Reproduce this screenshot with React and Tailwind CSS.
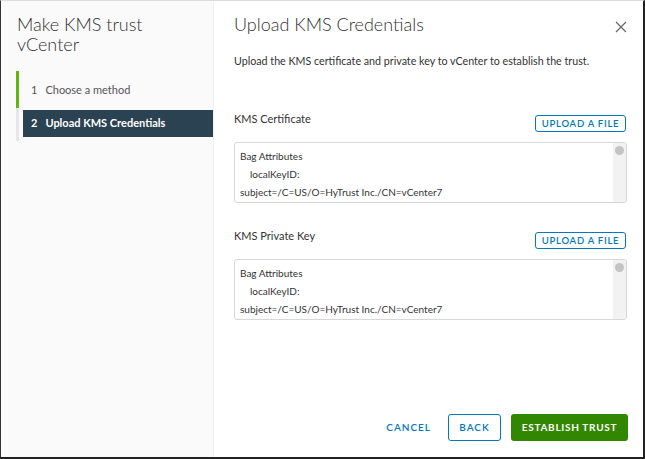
import React from "react";

function CertBox({ keyLine }) {
  return (
    <div className="mt-[10px] h-[61px] rounded-[3px] border border-[#d7d7d7] bg-white flex overflow-hidden">
      <div className="flex-1 pl-[5px] pt-[4px] text-[10px] leading-[18px] text-[#333]">
        <div>Bag Attributes</div>
        <div className="pl-[10px]">{keyLine}</div>
        <div>subject=/C=US/O=HyTrust Inc./CN=vCenter7</div>
      </div>
      <div className="w-[13px] bg-[#f2f2f2] flex justify-center pt-[3px]">
        <div className="w-[9px] h-[9px] rounded-full bg-[#c4c4c4]"></div>
      </div>
    </div>
  );
}

function Section({ label, keyLine }) {
  return (
    <div>
      <div className="flex items-start justify-between">
        <div className="text-[11px] text-[#333] pt-[1px] leading-[14px]">{label}</div>
        <button className="mt-[4px] h-[17px] w-[91px] rounded-[3px] border border-[#0079b8] text-[#0079b8] text-[9.5px] font-semibold tracking-[0.08em] leading-none mr-[1px]">
          UPLOAD A FILE
        </button>
      </div>
      <CertBox keyLine={keyLine} />
    </div>
  );
}

export default function App() {
  return (
    <div
      className="w-[645px] h-[459px] flex bg-white border-l border-t border-l-[#333] border-t-[#ddd] border-r-2 border-b-2 border-r-[#222] border-b-[#222] overflow-hidden"
      style={{ fontFamily: "Lato, 'Open Sans', sans-serif" }}
    >
      <div className="w-[213px] shrink-0 bg-[#fafafa] border-r border-[#eee] pt-[13px]">
        <div className="pl-[16px] text-[18px] leading-[20px] font-light text-[#313131]">
          Make KMS trust
          <br />
          vCenter
        </div>
        <div className="mt-[17px] ml-[15px] flex">
          <div className="w-[3px] flex flex-col">
            <div className="h-[37px] bg-[#60b515]"></div>
            <div className="h-[33px] bg-[#e6e6e6]"></div>
          </div>
          <div className="flex-1 flex flex-col">
            <div className="h-[39px] flex items-center pl-[12px] text-[11px] text-[#565656]">
              <span className="mr-[8px]">1</span>Choose a method
            </div>
            <div className="ml-[4px] h-[27px] bg-[#2a4251] flex items-center pl-[8px] text-[11px] font-bold text-white">
              <span className="mr-[8px]">2</span>Upload KMS Credentials
            </div>
          </div>
        </div>
      </div>
      <div className="flex-1 flex flex-col pl-[20px] pr-[15px] pt-[12px] pb-[16px]">
        <div className="flex items-start justify-between">
          <div className="text-[18px] leading-[22px] font-light text-[#313131]">
            Upload KMS Credentials
          </div>
          <svg width="12" height="12" viewBox="0 0 12 12" className="mt-[8px] mr-[1px]">
            <path d="M1 1L11 11M11 1L1 11" stroke="#666" strokeWidth="1.2" />
          </svg>
        </div>
        <div className="mt-[19px] text-[10.7px] leading-[14px] text-[#333]">
          Upload the KMS certificate and private key to vCenter to establish the trust.
        </div>
        <div className="mt-[43px] mr-[1px]">
          <Section label="KMS Certificate" keyLine="localKeyID:" />
        </div>
        <div className="mt-[25px] mr-[1px]">
          <Section label="KMS Private Key" keyLine="localKeyID:" />
        </div>
        <div className="flex-1"></div>
        <div className="flex items-center justify-end">
          <button className="h-[26px] px-0 text-[10px] font-semibold tracking-[0.1em] text-[#0079b8]">
            CANCEL
          </button>
          <button className="ml-[17px] h-[27px] w-[53px] rounded-[3px] border border-[#0079b8] text-[10px] font-semibold tracking-[0.1em] text-[#0079b8]">
            BACK
          </button>
          <button className="ml-[10px] h-[27px] w-[117px] rounded-[3px] bg-[#318700] text-[10px] font-bold tracking-[0.07em] text-white">
            ESTABLISH TRUST
          </button>
        </div>
      </div>
    </div>
  );
}
